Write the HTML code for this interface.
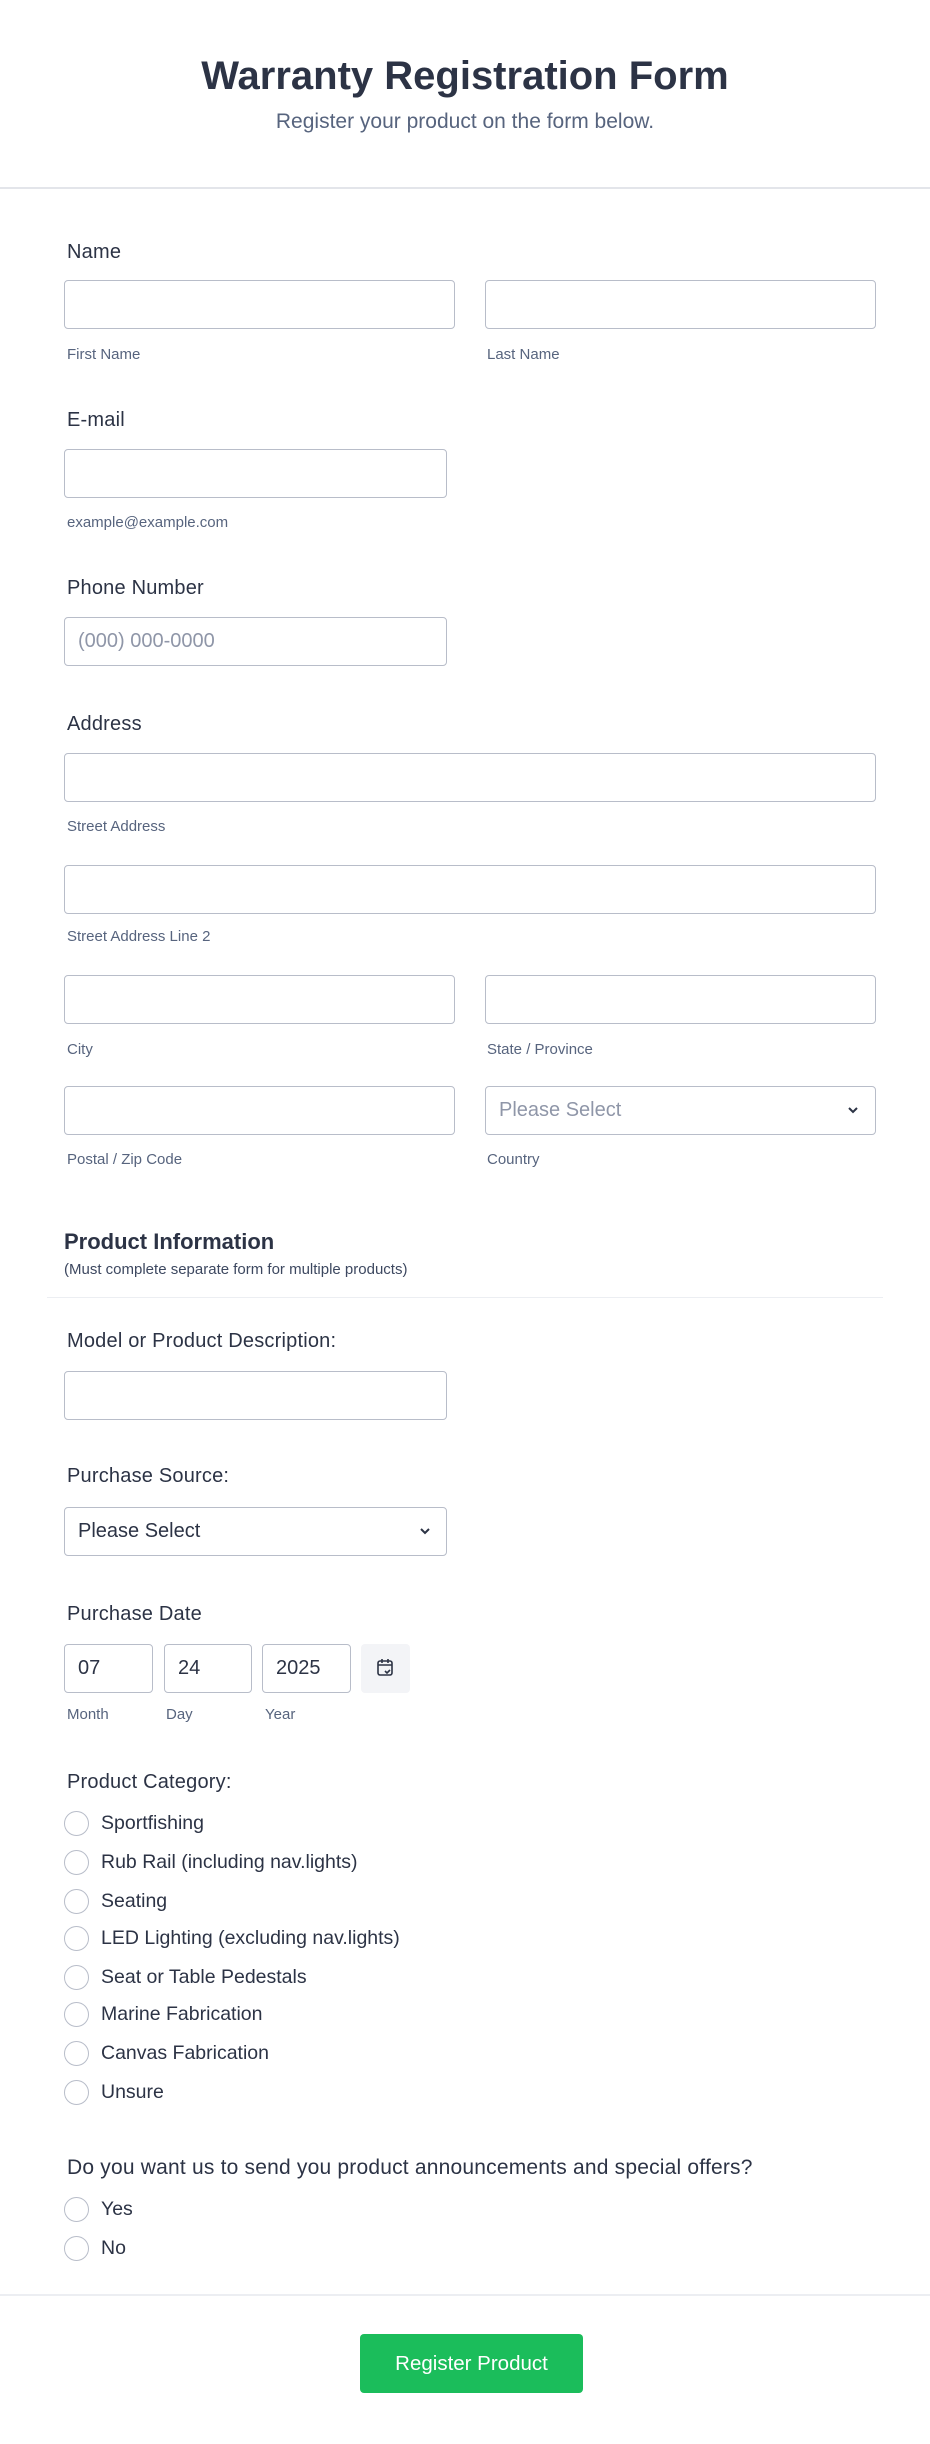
<!DOCTYPE html>
<html><head><meta charset="utf-8"><style>
*{box-sizing:border-box;margin:0;padding:0}
body{width:930px;height:2444px;position:relative;background:#fff;font-family:"Liberation Sans",sans-serif;color:#2c3345;overflow:hidden}
.a{position:absolute}
.t{position:absolute;white-space:nowrap}
.lbl{font-size:20px;color:#2c3345;line-height:1;letter-spacing:0.2px}
.sub{font-size:15px;color:#57647e;line-height:1}
.in{position:absolute;border:1px solid #b8bdc9;border-radius:4px;background:#fff;height:49px}
.ph{font-size:20px;line-height:47px;padding-left:13px}
.r{position:absolute;left:64px;width:25px;height:25px;border:1.5px solid #b8bdc9;border-radius:50%}
.rt{position:absolute;left:101px;font-size:19.5px;line-height:1;color:#2c3345}
</style></head><body>
<div class="t" style="left:0;width:930px;text-align:center;top:54px;font-size:40px;font-weight:bold;color:#2c3345">Warranty Registration Form</div>
<div class="t" style="left:0;width:930px;text-align:center;top:110px;font-size:21px;color:#57647e">Register your product on the form below.</div>
<div class="a" style="left:0;top:187px;width:930px;height:2px;background:#e3e5ea"></div>

<div class="t lbl" style="left:67px;top:242px">Name</div>
<div class="in" style="left:64px;top:280px;width:391px"></div>
<div class="in" style="left:485px;top:280px;width:391px"></div>
<div class="t sub" style="left:67px;top:347px">First Name</div>
<div class="t sub" style="left:487px;top:347px">Last Name</div>

<div class="t lbl" style="left:67px;top:410px">E-mail</div>
<div class="in" style="left:64px;top:449px;width:383px"></div>
<div class="t sub" style="left:67px;top:515px">example@example.com</div>

<div class="t lbl" style="left:67px;top:578px">Phone Number</div>
<div class="in ph" style="left:64px;top:617px;width:383px;color:#8f96a8">(000) 000-0000</div>

<div class="t lbl" style="left:67px;top:714px">Address</div>
<div class="in" style="left:64px;top:753px;width:812px"></div>
<div class="t sub" style="left:67px;top:819px">Street Address</div>
<div class="in" style="left:64px;top:865px;width:812px"></div>
<div class="t sub" style="left:67px;top:929px">Street Address Line 2</div>
<div class="in" style="left:64px;top:975px;width:391px"></div>
<div class="in" style="left:485px;top:975px;width:391px"></div>
<div class="t sub" style="left:67px;top:1042px">City</div>
<div class="t sub" style="left:487px;top:1042px">State / Province</div>
<div class="in" style="left:64px;top:1086px;width:391px"></div>
<div class="in ph" style="left:485px;top:1086px;width:391px;color:#8f96a8">Please Select</div>
<svg class="a" style="left:846px;top:1104px" width="14" height="12" viewBox="0 0 14 12"><path d="M3 4l4 4 4-4" fill="none" stroke="#2c3345" stroke-width="2"/></svg>
<div class="t sub" style="left:67px;top:1152px">Postal / Zip Code</div>
<div class="t sub" style="left:487px;top:1152px">Country</div>

<div class="t" style="left:64px;top:1229px;font-size:22px;font-weight:bold;color:#2c3345">Product Information</div>
<div class="t" style="left:64px;top:1261px;font-size:15px;color:#3d4860">(Must complete separate form for multiple products)</div>
<div class="a" style="left:47px;top:1297px;width:836px;height:1px;background:#eceef2"></div>

<div class="t lbl" style="left:67px;top:1331px">Model or Product Description:</div>
<div class="in" style="left:64px;top:1371px;width:383px"></div>

<div class="t lbl" style="left:67px;top:1466px">Purchase Source:</div>
<div class="in ph" style="left:64px;top:1507px;width:383px;color:#2c3345">Please Select</div>
<svg class="a" style="left:418px;top:1525px" width="14" height="12" viewBox="0 0 14 12"><path d="M3 4l4 4 4-4" fill="none" stroke="#2c3345" stroke-width="2"/></svg>

<div class="t lbl" style="left:67px;top:1604px">Purchase Date</div>
<div class="in ph" style="left:64px;top:1644px;width:89px">07</div>
<div class="in ph" style="left:164px;top:1644px;width:88px">24</div>
<div class="in ph" style="left:262px;top:1644px;width:89px">2025</div>
<div class="a" style="left:361px;top:1644px;width:49px;height:49px;background:#f3f4f7;border-radius:4px"></div>
<svg class="a" style="left:376px;top:1658px" width="18" height="20" viewBox="0 0 18 20"><rect x="2" y="3" width="14" height="14" rx="2" fill="none" stroke="#2c3345" stroke-width="1.6"/><path d="M2 7h14M6 1v4M12 1v4M9 13l2 2 3-3" fill="none" stroke="#2c3345" stroke-width="1.6"/></svg>
<div class="t sub" style="left:67px;top:1707px">Month</div>
<div class="t sub" style="left:166px;top:1707px">Day</div>
<div class="t sub" style="left:265px;top:1707px">Year</div>

<div class="t lbl" style="left:67px;top:1772px">Product Category:</div>
<div class="r" style="top:1811px"></div><div class="rt" style="top:1814px">Sportfishing</div>
<div class="r" style="top:1850px"></div><div class="rt" style="top:1853px">Rub Rail (including nav.lights)</div>
<div class="r" style="top:1889px"></div><div class="rt" style="top:1892px">Seating</div>
<div class="r" style="top:1926px"></div><div class="rt" style="top:1929px">LED Lighting (excluding nav.lights)</div>
<div class="r" style="top:1965px"></div><div class="rt" style="top:1968px">Seat or Table Pedestals</div>
<div class="r" style="top:2002px"></div><div class="rt" style="top:2005px">Marine Fabrication</div>
<div class="r" style="top:2041px"></div><div class="rt" style="top:2044px">Canvas Fabrication</div>
<div class="r" style="top:2080px"></div><div class="rt" style="top:2083px">Unsure</div>

<div class="t lbl" style="left:67px;top:2157px;font-size:21px">Do you want us to send you product announcements and special offers?</div>
<div class="r" style="top:2197px"></div><div class="rt" style="top:2200px">Yes</div>
<div class="r" style="top:2236px"></div><div class="rt" style="top:2239px">No</div>

<div class="a" style="left:0;top:2294px;width:930px;height:2px;background:#eceef2"></div>
<div class="a" style="left:360px;top:2334px;width:223px;height:59px;background:#1bbd5b;border-radius:4px;color:#fff;font-size:20.5px;text-align:center;line-height:59px">Register Product</div>
</body></html>
